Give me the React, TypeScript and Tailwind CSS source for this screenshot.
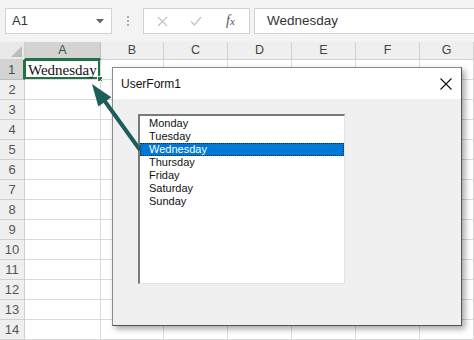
import React from 'react';

const cols = ['A', 'B', 'C', 'D', 'E', 'F', 'G'];
const rows = Array.from({ length: 14 }, (_, i) => i + 1);
const days = ['Monday', 'Tuesday', 'Wednesday', 'Thursday', 'Friday', 'Saturday', 'Sunday'];

function TopBar() {
  return (
    <div className="h-[42px] flex items-center pl-[5px] bg-[#f3f3f3] overflow-hidden">
      {/* Name box */}
      <div className="w-[107px] h-[26px] bg-white border border-[#d2d2d2] flex items-center justify-between pl-[6px] pr-[7px]">
        <span className="text-[13px] text-[#333]">A1</span>
        <svg width="8" height="5" viewBox="0 0 8 5">
          <path d="M0 0 L8 0 L4 4.5 Z" fill="#666" />
        </svg>
      </div>
      <div className="w-[31px] flex flex-col items-center gap-[2px]">
        <span className="w-[2px] h-[2px] bg-[#aaa]" />
        <span className="w-[2px] h-[2px] bg-[#aaa]" />
        <span className="w-[2px] h-[2px] bg-[#aaa]" />
      </div>
      {/* Cancel / Enter / fx */}
      <div className="w-[107px] h-[26px] bg-white border border-[#d2d2d2] flex items-center pl-[13px]">
        <svg width="11" height="11" viewBox="0 0 11 11">
          <path d="M1 1 L10 10 M10 1 L1 10" stroke="#c4c4c4" strokeWidth="1.3" />
        </svg>
        <svg width="12" height="10" viewBox="0 0 12 10" className="ml-[22px]">
          <path d="M1 5.5 L4.5 9 L11 1" stroke="#c4c4c4" strokeWidth="1.3" fill="none" />
        </svg>
        <span className="ml-[24px] text-[14px] italic text-[#555] leading-none" style={{ fontFamily: '"Liberation Serif", serif' }}>
          f<span className="text-[11px]">x</span>
        </span>
      </div>
      <div className="w-[4px]" />
      <div className="flex-1 h-[26px] bg-white border border-[#d2d2d2] -mr-[2px] flex items-center pl-[12px]">
        <span className="text-[13.5px] text-[#333]">Wednesday</span>
      </div>
    </div>
  );
}

function Sheet() {
  return (
    <div className="grid grid-cols-[25px_76px_63px_64px_64px_64px_64px_1fr] grid-rows-[18px_repeat(14,20px)] bg-white">
      {/* corner */}
      <div className="bg-[#e9e9e9] border-r border-b border-[#cfcfcf] flex items-end justify-end p-[2px]">
        <svg width="11" height="11" viewBox="0 0 11 11">
          <path d="M11 0 L11 11 L0 11 Z" fill="#bdbdbd" />
        </svg>
      </div>
      {cols.map((c) => (
        <div
          key={c}
          className={
            c === 'A'
              ? 'bg-[#d3d3d3] border-r border-[#bdbdbd] border-b-2 border-b-[#217346] flex items-center justify-center text-[12.5px] text-[#2b5d3f]'
              : 'bg-[#efefef] border-r border-b border-[#d0d0d0] flex items-center justify-center text-[12.5px] text-[#444]'
          }
        >
          {c}
        </div>
      ))}
      {rows.map((r) => (
        <React.Fragment key={r}>
          <div
            className={
              r === 1
                ? 'bg-[#d3d3d3] border-r-2 border-r-[#217346] border-b border-[#bdbdbd] flex items-center justify-center text-[13px] text-[#2b5d3f]'
                : 'bg-[#efefef] border-r border-b border-[#d0d0d0] flex items-center justify-center text-[13px] text-[#555]'
            }
          >
            {r}
          </div>
          {cols.map((c) => (
            <div key={c} className="relative border-r border-b border-[#dadada]">
              {r === 1 && c === 'A' && (
                <>
                  <div className="absolute -left-[1px] -top-[1px] -right-[0px] -bottom-[0px] border-2 border-[#217346]" />
                  <span
                    className="absolute left-[3px] top-[0px] text-[15px] leading-[20px] text-[#111]"
                    style={{ fontFamily: '"Liberation Serif", serif' }}
                  >
                    Wednesday
                  </span>
                  <div className="absolute -right-[3px] -bottom-[3px] w-[6px] h-[6px] bg-[#217346] border border-white" />
                </>
              )}
            </div>
          ))}
        </React.Fragment>
      ))}
    </div>
  );
}

function UserForm() {
  return (
    <div className="absolute left-[112px] top-[67px] w-[350px] h-[259px] flex flex-col border border-[#8a8a8a] border-r-[#555] border-b-[#555] shadow-[3px_3px_6px_rgba(0,0,0,0.35)] bg-[#f0f0f0]">
      <div className="h-[31px] bg-white flex items-center justify-between pl-[8px] pr-[9px]">
        <span className="text-[12px] text-[#111]">UserForm1</span>
        <svg width="12" height="12" viewBox="0 0 12 12">
          <path d="M0.5 0.5 L11.5 11.5 M11.5 0.5 L0.5 11.5" stroke="#111" strokeWidth="1.1" />
        </svg>
      </div>
      <div className="flex-1 pl-[25px] pt-[15px]">
        <div className="w-[207px] h-[170px] bg-white border-t-2 border-l-2 border-t-[#7a7a7a] border-l-[#7a7a7a] border-r border-b border-r-[#e3e3e3] border-b-[#e3e3e3] pt-[1px]">
          {days.map((d) => (
            <div
              key={d}
              className={
                d === 'Wednesday'
                  ? 'h-[13px] leading-[11px] pl-[8px] text-[11px] text-white bg-[#0078d7] border border-dotted border-[#1b2a3a]'
                  : 'h-[13px] leading-[12px] pl-[9px] text-[11px] text-[#111]'
              }
            >
              {d}
            </div>
          ))}
        </div>
      </div>
    </div>
  );
}

function Arrow() {
  return (
    <svg className="absolute left-0 top-0 pointer-events-none" width="474" height="340" viewBox="0 0 474 340">
      <line x1="104" y1="100" x2="140" y2="150" stroke="#1d5e5b" strokeWidth="4" />
      <polygon points="92,84 111.3,97.3 98.3,106.5" fill="#1d5e5b" />
    </svg>
  );
}

export default function App() {
  return (
    <div className="relative w-[474px] h-[340px] overflow-hidden bg-white" style={{ fontFamily: '"Liberation Sans", Arial, sans-serif' }}>
      <TopBar />
      <Sheet />
      <UserForm />
      <Arrow />
    </div>
  );
}
